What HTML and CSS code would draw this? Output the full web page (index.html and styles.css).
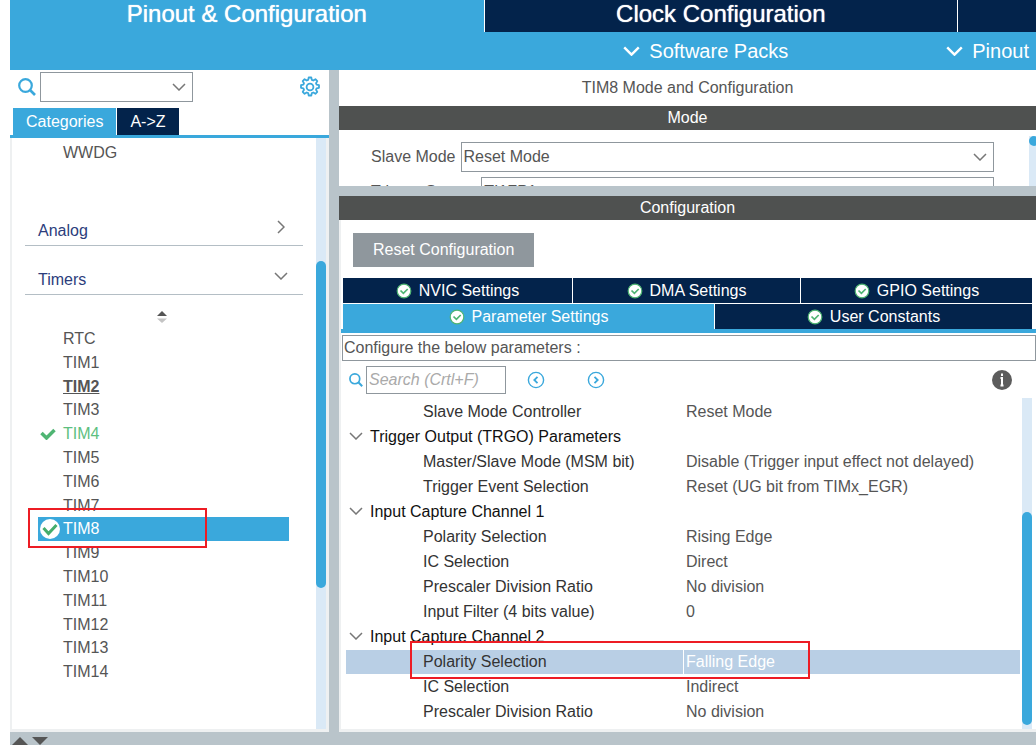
FILE: index.html
```html
<!DOCTYPE html>
<html lang="en">
<head>
  <meta charset="UTF-8">
  <meta name="viewport" content="width=device-width, initial-scale=1.0">
  <title>Pinout &amp; Configuration</title>
  <link rel="stylesheet" href="styles.css">
</head>
<body>
  <!-- shared icons -->
  <svg class="sprite" aria-hidden="true">
    <symbol id="chevron" viewBox="0 0 14 8"><path d="M1 1l6 6 6-6" fill="none" stroke="currentColor"/></symbol>
    <symbol id="search" viewBox="0 0 18 18"><circle cx="7.5" cy="7.5" r="6.3" fill="none" stroke="currentColor" stroke-width="2.2"/><path d="M12 12l5 5" stroke="currentColor" stroke-width="2.6"/></symbol>
    <symbol id="ok" viewBox="0 0 16 16"><circle cx="8" cy="8" r="6.800" fill="#fff" stroke="#4fb573" stroke-width="1.200"/><path d="M4.500 7.500l2.900 2.900 4.300-4.400" fill="none" stroke="#4fb573" stroke-width="1.700"/></symbol>
  </svg>

  <div class="app">
    <nav class="main-tabs">
      <button class="active">Pinout &amp; Configuration</button>
      <button>Clock Configuration</button>
      <button aria-label="Project Manager"></button>
    </nav>
    <div class="sub-nav">
      <button><svg class="chev"><use href="#chevron"/></svg>Software Packs</button>
      <button><svg class="chev"><use href="#chevron"/></svg>Pinout</button>
    </div>

    <main class="workspace">
      <aside class="sidebar">
        <div class="side-search">
          <svg class="search-icon"><use href="#search"/></svg>
          <div class="select-box">
            <select aria-label="Search peripheral"><option></option></select>
            <svg class="chev"><use href="#chevron"/></svg>
          </div>
          <button class="gear" aria-label="Settings">
            <svg viewBox="0 0 22 22" width="22" height="22" fill="none" stroke="currentColor" stroke-width="1.8" stroke-linejoin="round">
              <circle cx="11" cy="11" r="3.4"/>
              <path d="M9.7 1.5h2.6l.5 2.4 1.5.6 2.1-1.3 1.9 1.9L17 7.2l.6 1.5 2.4.5v2.6l-2.4.5-.6 1.5 1.3 2.1-1.9 1.9-2.1-1.3-1.5.6-.5 2.4H9.7l-.5-2.4-1.5-.6-2.1 1.3-1.9-1.9L5 13.8l-.6-1.5-2.4-.5V9.200l2.400-.5L5 7.200 3.700 5.100l1.900-1.900 2.100 1.300 1.500-.6z"/>
            </svg>
          </button>
        </div>
        <div class="side-tabs">
          <button class="active">Categories</button>
          <button>A-&gt;Z</button>
        </div>
        <div class="side-body">
          <div class="side-list">
            <div class="wwdg">WWDG</div>
            <button class="category">Analog <svg class="chev right"><use href="#chevron"/></svg></button>
            <button class="category">Timers <svg class="chev"><use href="#chevron"/></svg></button>
            <button class="sort" aria-label="Sort">
              <svg viewBox="0 0 10 12" width="10" height="12"><path d="M0 5l5-5 5 5z" fill="#555"/><path d="M0 7.500h10L5 12z" fill="#c4c4c4"/></svg>
            </button>
            <ul class="timers">
              <li>RTC</li>
              <li>TIM1</li>
              <li class="current">TIM2</li>
              <li>TIM3</li>
              <li class="enabled"><svg class="tick" viewBox="0 0 16 12"><path d="M1.500 5l5 5 8-8" fill="none" stroke="#4fb573" stroke-width="3.500"/></svg>TIM4</li>
              <li>TIM5</li>
              <li>TIM6</li>
              <li>TIM7</li>
              <li class="selected"><svg class="badge" viewBox="0 0 20 20"><circle cx="10" cy="10" r="10" fill="#fff"/><path d="M3.500 9l5 5.500 8-8.500" fill="none" stroke="#45ad6c" stroke-width="3"/></svg>TIM8<span class="mark"></span></li>
              <li>TIM9</li>
              <li>TIM10</li>
              <li>TIM11</li>
              <li>TIM12</li>
              <li>TIM13</li>
              <li>TIM14</li>
            </ul>
          </div>
          <div class="scroll"><div class="thumb"></div></div>
        </div>
      </aside>

      <section class="panel">
        <h1>TIM8 Mode and Configuration</h1>
        <h2>Mode</h2>
        <div class="mode">
          <div class="mode-fields">
            <div class="field">
              <label for="slave">Slave Mode</label>
              <div class="select-box">
                <select id="slave"><option>Reset Mode</option></select>
                <svg class="chev"><use href="#chevron"/></svg>
              </div>
            </div>
            <div class="field">
              <label for="trigger">Trigger Source</label>
              <div class="select-box">
                <select id="trigger"><option>TI1FP1</option></select>
                <svg class="chev"><use href="#chevron"/></svg>
              </div>
            </div>
          </div>
          <div class="scroll"><div class="thumb"></div></div>
        </div>
        <h2>Configuration</h2>
        <div class="config">
          <button class="reset">Reset Configuration</button>
          <div class="config-tabs top">
            <button><svg class="ok"><use href="#ok"/></svg>NVIC Settings</button>
            <button><svg class="ok"><use href="#ok"/></svg>DMA Settings</button>
            <button><svg class="ok"><use href="#ok"/></svg>GPIO Settings</button>
          </div>
          <div class="config-tabs bottom">
            <button class="active"><svg class="ok"><use href="#ok"/></svg>Parameter Settings</button>
            <button><svg class="ok"><use href="#ok"/></svg>User Constants</button>
          </div>
          <p class="hint">Configure the below parameters :</p>
          <div class="param-search">
            <svg class="search-icon"><use href="#search"/></svg>
            <input type="text" placeholder="Search (Crtl+F)" aria-label="Search parameters">
            <button class="step" aria-label="Previous"><svg viewBox="0 0 18 18" width="18" height="18" fill="none" stroke="currentColor" stroke-width="1.400"><circle cx="9" cy="9" r="7.600"/><path d="M10.500 5.800L7.300 9l3.200 3.200" stroke-width="1.800"/></svg></button>
            <button class="step" aria-label="Next"><svg viewBox="0 0 18 18" width="18" height="18" fill="none" stroke="currentColor" stroke-width="1.400"><circle cx="9" cy="9" r="7.600"/><path d="M7.500 5.800L10.700 9l-3.200 3.200" stroke-width="1.800"/></svg></button>
            <button class="info" aria-label="Information"><svg viewBox="0 0 20 20" width="20" height="20"><circle cx="10" cy="10" r="10" fill="#5c5c5c"/><path d="M10 3.500v2.500M8.500 8h1.500v7.500M8.500 15.500h3" fill="none" stroke="#fff" stroke-width="2"/></svg></button>
          </div>
          <div class="params">
            <table>
              <tbody>
                <tr><td>Slave Mode Controller</td><td>Reset Mode</td></tr>
                <tr class="group"><th colspan="2"><svg class="chev"><use href="#chevron"/></svg>Trigger Output (TRGO) Parameters</th></tr>
                <tr><td>Master/Slave Mode (MSM bit)</td><td>Disable (Trigger input effect not delayed)</td></tr>
                <tr><td>Trigger Event Selection</td><td>Reset (UG bit from TIMx_EGR)</td></tr>
                <tr class="group"><th colspan="2"><svg class="chev"><use href="#chevron"/></svg>Input Capture Channel 1</th></tr>
                <tr><td>Polarity Selection</td><td>Rising Edge</td></tr>
                <tr><td>IC Selection</td><td>Direct</td></tr>
                <tr><td>Prescaler Division Ratio</td><td>No division</td></tr>
                <tr><td>Input Filter (4 bits value)</td><td>0</td></tr>
                <tr class="group"><th colspan="2"><svg class="chev"><use href="#chevron"/></svg>Input Capture Channel 2</th></tr>
                <tr class="selected"><td>Polarity Selection<span class="mark"></span></td><td>Falling Edge</td></tr>
                <tr><td>IC Selection</td><td>Indirect</td></tr>
                <tr><td>Prescaler Division Ratio</td><td>No division</td></tr>
              </tbody>
            </table>
            <div class="scroll"><div class="thumb"></div></div>
          </div>
        </div>
      </section>
    </main>

    <footer class="splitter">
      <svg viewBox="0 0 16 8" width="16" height="8"><path d="M0 8l8-8 8 8z" fill="#555"/></svg>
      <svg viewBox="0 0 16 8" width="16" height="8"><path d="M0 0h16L8 8z" fill="#555"/></svg>
    </footer>
  </div>
</body>
</html>
```

FILE: styles.css
```css
* {
  box-sizing: border-box;
}
body {
  margin: 0;
  background: #fff;
  color: #555;
  font: 16px/24px "Liberation Sans", Arial, sans-serif;
}
button, input, select {
  font: inherit;
  color: inherit;
  margin: 0;
  padding: 0;
  border: none;
  border-radius: 0;
  background: none;
}
svg {
  display: block;
  flex: none;
}
.sprite {
  position: absolute;
  width: 0;
  height: 0;
}
.app {
  display: flex;
  flex-direction: column;
  height: 100vh;
  padding: 0 0 3px 10px;
  overflow: hidden;
}
.chev {
  width: 14px;
  height: 8px;
  color: #777;
  stroke-width: 1.5px;
}
.chev.right {
  transform: rotate(-90deg);
}

/* top bars */
.main-tabs {
  display: grid;
  grid-template-columns: 474fr 473fr 78fr;
  gap: 1px;
  height: 32px;
  background: #fff;
}
.main-tabs button {
  background: #03234b;
  color: #fff;
  font-size: 24px;
  line-height: 28px;
  padding-bottom: 4px;
  text-shadow: 0 0 1px #fff;
}
.main-tabs .active, .side-tabs .active, .config-tabs .active {
  background: #3aa8dc;
}
.sub-nav {
  display: flex;
  justify-content: flex-end;
  gap: 158px;
  height: 38px;
  padding-right: 7px;
  background: #3aa8dc;
}
.sub-nav button {
  display: flex;
  align-items: center;
  gap: 9px;
  color: #fff;
  font-size: 20px;
}
.sub-nav .chev {
  width: 17px;
  height: 10px;
  color: #fff;
  stroke-width: 2px;
}

.workspace {
  flex: 1;
  min-height: 0;
  display: flex;
  gap: 10px;
  background: #b9c4ca;
}

/* left side */
.sidebar {
  width: 319px;
  display: flex;
  flex-direction: column;
  background: #fff;
}
.side-search {
  display: flex;
  align-items: center;
  gap: 4px;
  height: 38px;
  padding: 0 8px 4px;
}
.search-icon {
  width: 18px;
  height: 18px;
  color: #3aa8dc;
}
.select-box {
  position: relative;
  width: 153px;
}
.select-box select {
  display: block;
  width: 100%;
  height: 30px;
  padding-left: 2px;
  border: 1px solid #8f979d;
  background: #fff;
  appearance: none;
}
.select-box .chev {
  position: absolute;
  right: 7px;
  top: 11px;
  pointer-events: none;
}
.gear {
  margin-left: auto;
  color: #3aa8dc;
}
.side-tabs {
  display: flex;
  gap: 1px;
  padding-left: 3px;
  border-bottom: 3px solid #3aa8dc;
}
.side-tabs button {
  height: 27px;
  padding: 0 13px;
  background: #03234b;
  color: #fff;
}
.side-body {
  flex: 1;
  min-height: 0;
  display: flex;
  border: solid #eef0f1;
  border-width: 0 3px 3px 2px;
}
.side-list {
  flex: 1;
  padding: 3px 13px 0;
}
.wwdg {
  height: 78px;
  padding-left: 38px;
}
.category {
  display: flex;
  justify-content: space-between;
  width: 100%;
  height: 27px;
  margin-bottom: 22px;
  padding: 0 15px 0 13px;
  border-bottom: 1px solid #b4bec5;
  color: #2c3d7c;
}
.category .chev {
  margin-top: 4px;
}
.sort {
  display: block;
  margin: -6px auto 4px 132px;
}
.timers {
  display: grid;
  grid-auto-rows: 1fr;
  height: 357px;
  margin: 0 14px 0 13px;
  padding: 0;
  line-height: 23px;
  list-style: none;
}
.timers li {
  position: relative;
  padding-left: 25px;
}
.timers .current {
  font-weight: bold;
  text-decoration: underline;
}
.timers .enabled {
  color: #5dbf80;
}
.timers .selected {
  background: #3aa8dc;
  color: #fff;
}
.tick, .badge {
  position: absolute;
  left: 2px;
  top: 6px;
  width: 16px;
  height: 12px;
}
.badge {
  top: 2px;
  width: 20px;
  height: 20px;
}
.mark {
  position: absolute;
  left: -10px;
  top: -9px;
  z-index: 1;
  width: 179px;
  height: 40px;
  border: 2px solid #ed1c24;
}

/* scrollbars */
.scroll {
  width: 10px;
  background: #dae9f6;
}
.thumb {
  border-radius: 5px;
  background: #3aa8dc;
}
.side-body .thumb {
  height: 327px;
  margin-top: 123px;
}

/* right side */
.panel {
  flex: 1;
  min-width: 0;
  display: flex;
  flex-direction: column;
}
h1, h2 {
  margin: 0;
  font-size: 16px;
  font-weight: normal;
  text-align: center;
}
h1 {
  height: 36px;
  line-height: 36px;
  background: #fff;
}
h2 {
  height: 24px;
  background: #4f5150;
  color: #fff;
}
.mode {
  display: flex;
  height: 56px;
  margin-bottom: 10px;
  background: #fff;
  overflow: hidden;
}
.mode-fields {
  flex: 1;
  padding: 12px 35px 0 32px;
}
.field {
  display: flex;
  align-items: center;
  gap: 5px;
  margin-bottom: 5px;
}
.field .select-box {
  flex: 1;
}
.mode .scroll {
  width: 7px;
  margin-top: 6px;
}
.mode .thumb {
  width: 10px;
  height: 10px;
}
.config {
  flex: 1;
  min-height: 0;
  display: flex;
  flex-direction: column;
  background: #fff;
  border-left: 2px solid #eef0f1;
  border-bottom: 3px solid #eef0f1;
}
.reset {
  align-self: flex-start;
  height: 34px;
  margin: 13px 0 11px 12px;
  padding: 0 20px;
  background: #8f979d;
  color: #fff;
}
.config-tabs {
  display: grid;
  gap: 1px;
  padding: 0 4px 0 2px;
}
.config-tabs.top {
  grid-template-columns: 229fr 227fr 231fr;
  margin-bottom: 1px;
}
.config-tabs.bottom {
  grid-template-columns: 371fr 317fr;
  border-bottom: 4px solid #3aa8dc;
}
.config-tabs button {
  display: flex;
  align-items: center;
  justify-content: center;
  gap: 7px;
  height: 25px;
  background: #03234b;
  color: #fff;
}
.config-tabs .ok {
  width: 16px;
  height: 16px;
}
.hint {
  margin: 2px 0 0 1px;
  padding-left: 1px;
  border: 1px solid #8f979d;
}
.param-search {
  display: flex;
  align-items: center;
  height: 37px;
  padding: 0 24px 0 8px;
}
.param-search .search-icon {
  width: 14px;
  height: 14px;
}
.param-search input {
  width: 140px;
  height: 28px;
  margin: 0 21px 0 3px;
  padding-left: 2px;
  border: 1px solid #8f979d;
}
.param-search input::placeholder {
  color: #aaa;
  font-style: italic;
}
.step {
  margin-right: 42px;
  color: #3aa8dc;
}
.info {
  margin-left: auto;
}
.params {
  flex: 1;
  min-height: 0;
  display: flex;
  gap: 2px;
  padding: 0 4px 0 5px;
}
.params table {
  flex: 1;
  table-layout: fixed;
  border-spacing: 0;
  align-self: flex-start;
  margin-top: 1px;
}
.params td, .params th {
  height: 25px;
  padding: 0;
  font-weight: normal;
  text-align: left;
  line-height: 24px;
  border-top: 1px solid #fff;
}
.params td:first-child {
  position: relative;
  width: 50%;
  padding-left: 77px;
  color: #333;
}
.params td:last-child {
  padding-left: 2px;
  border-left: 1px solid #fff;
}
.params .group th {
  color: #111;
}
.group .chev {
  display: inline-block;
  margin: 0 7px 2px 3px;
}
.params .selected td {
  background: #b9cfe5;
}
.params .selected td:last-child {
  color: #fff;
}
.params .mark {
  left: 64px;
  top: -9px;
  width: 400px;
  height: 38px;
}
.params .thumb {
  height: 213px;
  margin-top: 114px;
}

.splitter {
  display: flex;
  gap: 4px;
  align-items: flex-end;
  height: 13px;
  padding-left: 2px;
  background: #b9c4ca;
}
```
